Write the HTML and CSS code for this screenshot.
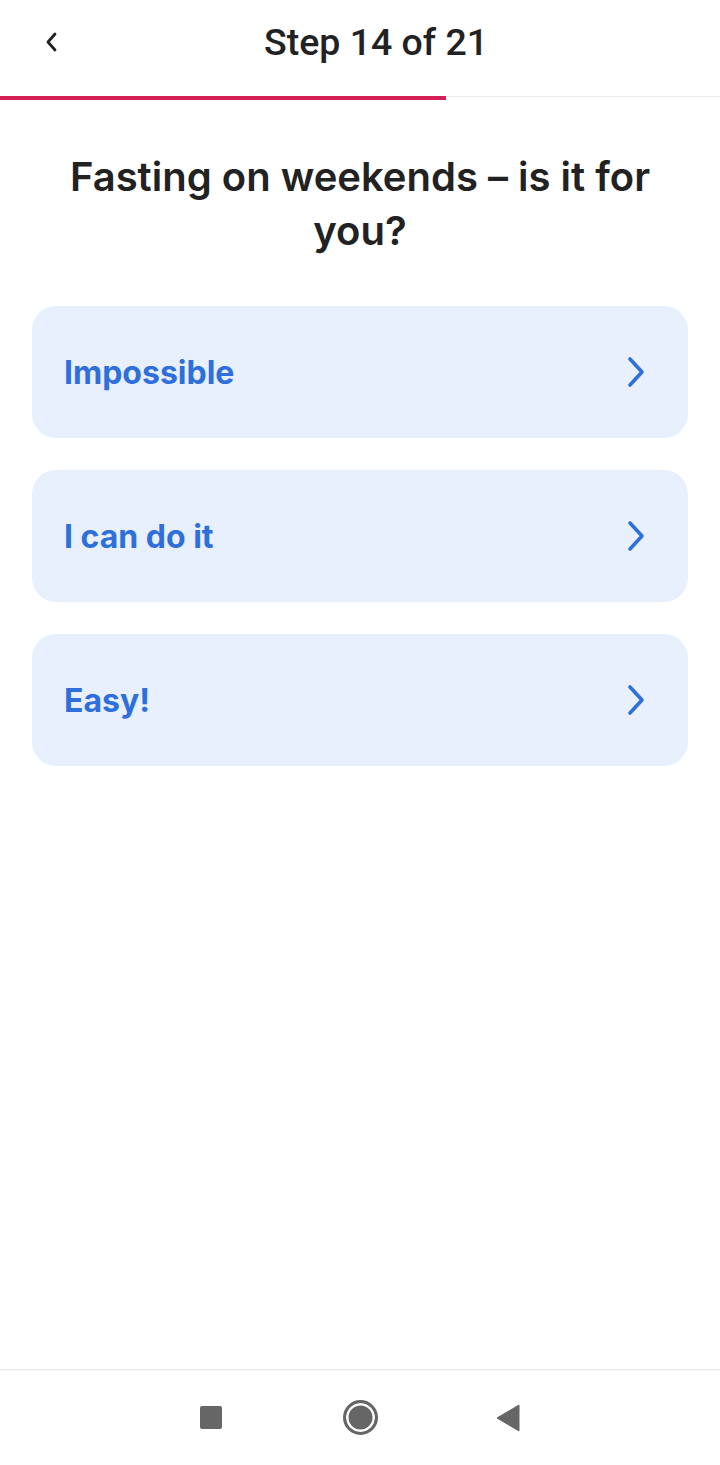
FILE: index.html
```html
<!DOCTYPE html>
<html>
<head>
<meta charset="utf-8">
<link rel="stylesheet" href="styles.css">
</head>
<body>
<div class="screen">
  <header class="topbar">
    <button class="back" aria-label="Back">
      <svg width="24" height="24" viewBox="0 0 24 24"><path d="M15 4 L8 12 L15 20" fill="none" stroke="#222" stroke-width="2.8" stroke-linecap="round" stroke-linejoin="round"/></svg>
    </button>
    <div class="title">Step 14 of 21</div>
  </header>
  <div class="progress"><div class="progress-fill" style="width: 61.9%"></div></div>
  <main class="content">
    <h1 class="question">Fasting on weekends – is it for you?</h1>
    <div class="options">
      <button class="option"><span>Impossible</span><svg class="chev" width="24" height="32" viewBox="0 0 24 32"><path d="M6 3 L18 16 L6 29" fill="none" stroke="#2f6fdc" stroke-width="3.6" stroke-linecap="round" stroke-linejoin="round"/></svg></button>
      <button class="option"><span>I can do it</span><svg class="chev" width="24" height="32" viewBox="0 0 24 32"><path d="M6 3 L18 16 L6 29" fill="none" stroke="#2f6fdc" stroke-width="3.6" stroke-linecap="round" stroke-linejoin="round"/></svg></button>
      <button class="option"><span>Easy!</span><svg class="chev" width="24" height="32" viewBox="0 0 24 32"><path d="M6 3 L18 16 L6 29" fill="none" stroke="#2f6fdc" stroke-width="3.6" stroke-linecap="round" stroke-linejoin="round"/></svg></button>
    </div>
  </main>
  <nav class="sysnav">
    <span class="nav-square"></span>
    <span class="nav-home"></span>
    <svg class="nav-back" width="24" height="28" viewBox="0 0 24 28"><path d="M23 1 L1 14 L23 27 Z" fill="#666" stroke="#666" stroke-width="1" stroke-linejoin="round"/></svg>
  </nav>
</div>
</body>
</html>
```

FILE: styles.css
```css
* { box-sizing: border-box; }
html, body { margin: 0; padding: 0; background: #fff; }
body { font-family: Inter, "Noto Sans", sans-serif; color: #222; }
.screen { width: 720px; height: 1465px; display: flex; flex-direction: column; }
.topbar { height: 96px; display: flex; align-items: center; padding: 0 0 12px 28px; }
.back { width: 48px; height: 48px; border: 0; background: none; padding: 0; display: flex; align-items: center; justify-content: center; }
.title { flex: 1; text-align: center; font-family: Roboto, sans-serif; font-weight: 500; font-size: 37.5px; color: #222; margin-right: 44px; }
.progress { height: 4px; background: #fff; border-top: 1px solid #ececec; }
.progress-fill { height: 4px; background: #d41f57; margin-top: -1px; }
.content { flex: 1; padding: 50px 40px 0; }
.question { margin: 0 0 48px; text-align: center; font-size: 40px; font-weight: 600; line-height: 54px; color: #222; letter-spacing: 0; }
.options { display: flex; flex-direction: column; gap: 32px; margin: 0 -8px; }
.option { height: 132px; border: 0; border-radius: 24px; background: #e8f0fd; display: flex; align-items: center; justify-content: space-between; padding: 0 40px 0 32px; font-family: Inter, sans-serif; font-size: 32px; font-weight: 700; color: #2f6fdc; text-align: left; }
.sysnav { height: 96px; border-top: 1px solid #e6e6e6; display: flex; align-items: center; justify-content: center; }
.nav-square { width: 22px; height: 23px; background: #666; border-radius: 2px; margin-right: 121px; }
.nav-home { width: 35px; height: 35px; border-radius: 50%; border: 3px solid #666; background: #666; box-shadow: inset 0 0 0 2.5px #fff; margin-right: 118px; }
.nav-back { display: block; }
```
